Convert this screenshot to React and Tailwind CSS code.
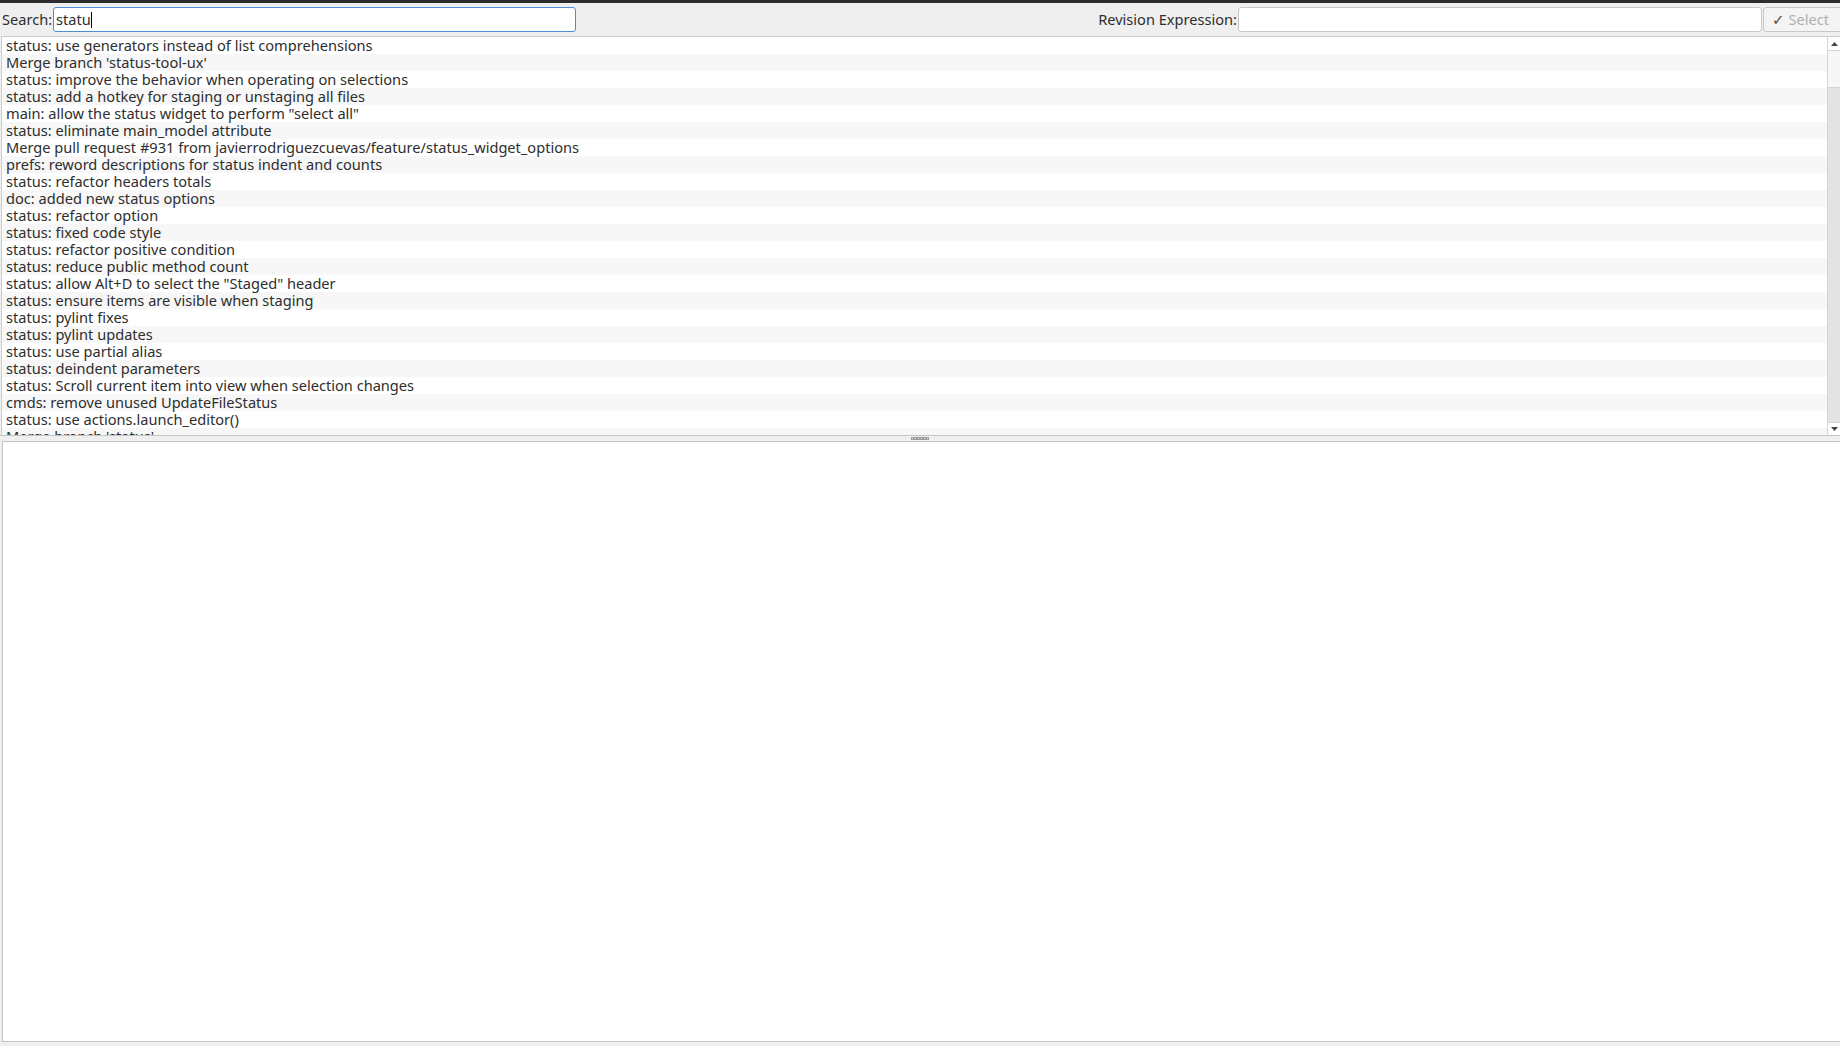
import React from "react";

const commits = [
  "status: use generators instead of list comprehensions",
  "Merge branch 'status-tool-ux'",
  "status: improve the behavior when operating on selections",
  "status: add a hotkey for staging or unstaging all files",
  'main: allow the status widget to perform "select all"',
  "status: eliminate main_model attribute",
  "Merge pull request #931 from javierrodriguezcuevas/feature/status_widget_options",
  "prefs: reword descriptions for status indent and counts",
  "status: refactor headers totals",
  "doc: added new status options",
  "status: refactor option",
  "status: fixed code style",
  "status: refactor positive condition",
  "status: reduce public method count",
  'status: allow Alt+D to select the "Staged" header',
  "status: ensure items are visible when staging",
  "status: pylint fixes",
  "status: pylint updates",
  "status: use partial alias",
  "status: deindent parameters",
  "status: Scroll current item into view when selection changes",
  "cmds: remove unused UpdateFileStatus",
  "status: use actions.launch_editor()",
  "Merge branch 'status'",
];

const font = "font-['Noto_Sans','DejaVu_Sans',sans-serif]";

const App = () => {
  return (
    <div className={`w-[1840px] h-[1046px] flex flex-col bg-[#efefef] overflow-hidden text-[14.6px] text-[#2e2e2e] ${font}`}>
      {/* window top edge */}
      <div className="h-[3px] bg-[#2c2c2c]" />

      {/* toolbar */}
      <div className="h-[33px] flex items-center">
        <span className="pl-[2px] pr-[1px] shrink-0 whitespace-nowrap">Search:</span>
        <div className="w-[523px] h-[25px] bg-white border border-[#4a90d9] rounded-[3px] flex items-center pl-[2px]">
          <span>statu</span>
          <span className="w-px h-[16px] bg-black" />
        </div>
        <div className="flex-1" />
        <span className="pr-[1px] shrink-0 whitespace-nowrap">Revision Expression:</span>
        <div className="w-[524px] h-[25px] bg-white border border-[#cdc7c2] rounded-[3px]" />
        <div className="ml-[1px] -mr-[13px] w-[90px] shrink-0 h-[25px] bg-[#f4f4f4] border border-[#cdc7c2] rounded-[3px] flex items-center pl-[8px] gap-[4px] text-[#b0b0b0]">
          <span className="text-[#4a4a4a] text-[15px] font-bold">✓</span>
          <span>Select</span>
        </div>
      </div>

      {/* commit list */}
      <div className="h-[399px] ml-[1px] flex bg-white border-t border-l border-[#cdcdcd]">
        <div className="flex-1 overflow-hidden">
          {commits.map((c, i) => (
            <div
              key={i}
              className={`h-[17px] leading-[17px] pl-[4px] whitespace-nowrap ${i % 2 ? "bg-[#f7f7f7]" : "bg-white"}`}
            >
              {c}
            </div>
          ))}
        </div>
        {/* scrollbar */}
        <div className="w-[13px] flex flex-col border-l border-[#d4d4d4] bg-[#e3e3e3]">
          <div className="h-[13px] bg-white flex items-center justify-center">
            <svg width="7" height="4" viewBox="0 0 7 4">
              <path d="M0 4 L3.5 0 L7 4 Z" fill="#444" />
            </svg>
          </div>
          <div className="h-[38px] bg-[#f7f7f7] border-y border-[#d4d4d4]" />
          <div className="flex-1" />
          <div className="h-[13px] bg-white border-t border-[#d4d4d4] flex items-center justify-center">
            <svg width="7" height="4" viewBox="0 0 7 4">
              <path d="M0 0 L7 0 L3.5 4 Z" fill="#444" />
            </svg>
          </div>
        </div>
      </div>

      {/* splitter */}
      <div className="h-[6px] border-t border-[#c4c4c4] flex items-center justify-center gap-[2px]">
        {[0, 1, 2, 3, 4, 5].map((d) => (
          <span key={d} className="w-[1px] h-[1px] outline outline-[1px] outline-[#9a9a9a]" />
        ))}
      </div>

      {/* diff pane */}
      <div className="h-[601px] ml-[2px] bg-white border border-r-0 border-[#c4c4c4]" />
    </div>
  );
};

export default App;
